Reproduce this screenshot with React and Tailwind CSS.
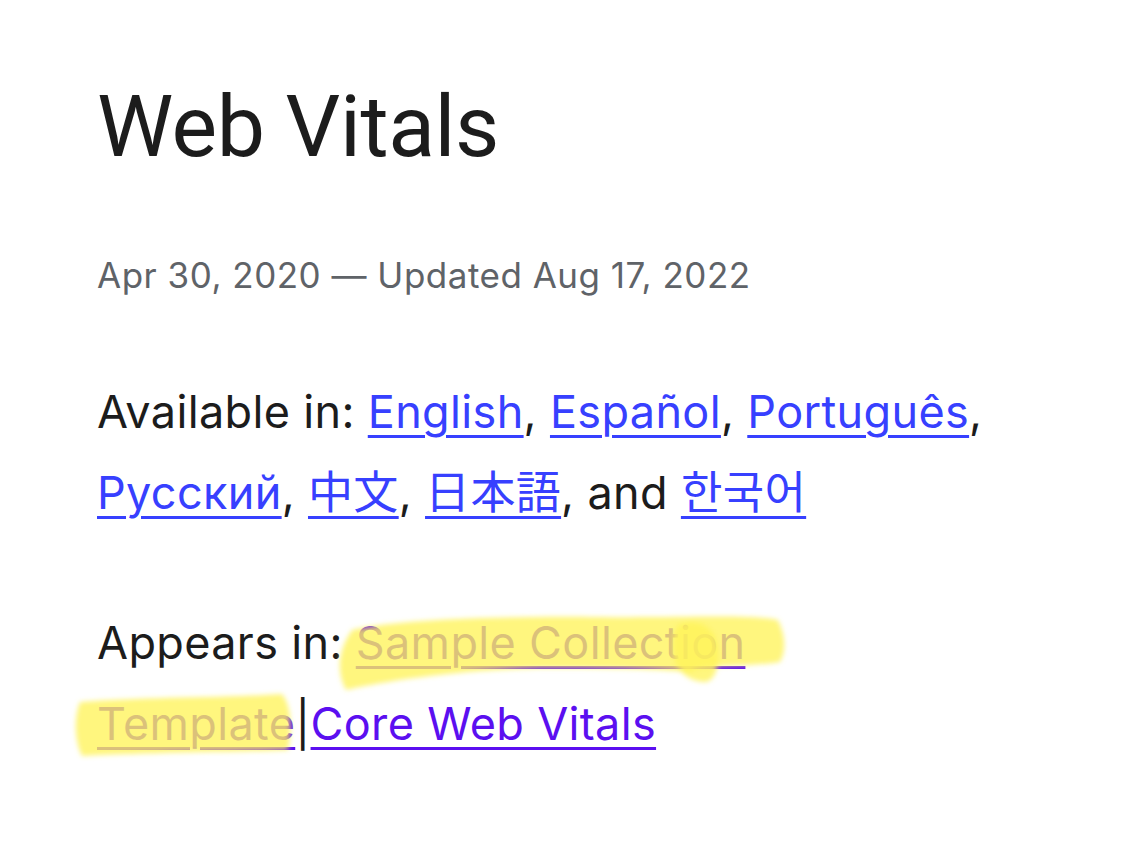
const langs = [
  ["English", ","],
  ["Español", ","],
  ["Português", ","],
];

const langs2 = [
  ["Русский", ","],
  ["中文", ","],
  ["日本語", ", and"],
];

const Link = ({ children, visited }) => (
  <a
    href="#"
    className={
      visited
        ? "text-[#5b0ff0] underline decoration-[3px] underline-offset-[7px]"
        : "text-[#3740ff] underline decoration-[3px] underline-offset-[7px]"
    }
  >
    {children}
  </a>
);

const Highlighter = () => (
  <svg
    className="pointer-events-none absolute inset-0"
    width="1125"
    height="853"
    viewBox="0 0 1125 853"
  >
    <defs>
      <filter id="soft" x="-10%" y="-30%" width="120%" height="160%">
        <feGaussianBlur stdDeviation="2.5" />
      </filter>
    </defs>
    <g filter="url(#soft)" fill="#fff35a" fillOpacity="0.78">
      <path d="M352 630 C 400 618, 520 616, 600 617 C 680 618, 750 614, 778 620 C 786 636, 786 652, 780 662 C 740 668, 700 664, 690 672 C 650 668, 600 668, 540 668 C 460 670, 390 680, 346 690 C 336 672, 338 650, 352 630 Z" />
      <path d="M680 624 C 700 618, 716 628, 718 648 C 720 664, 716 680, 706 682 C 690 682, 676 672, 674 656 C 672 640, 674 628, 680 624 Z" />
      <path d="M80 702 C 140 697, 220 698, 282 694 C 292 706, 292 730, 288 750 C 240 752, 160 752, 82 756 C 74 740, 74 716, 80 702 Z" />
    </g>
  </svg>
);

export default function App() {
  return (
    <div className="relative min-h-screen w-[1125px] overflow-hidden bg-white pl-[97px] pt-[84px]">
      <h1 className="font-['Roboto',sans-serif] text-[86px] font-normal leading-none tracking-[-0.4px] text-[#1c1c1c]">
        Web Vitals
      </h1>

      <p className="mt-[88px] font-['Inter',sans-serif] text-[35px] leading-none tracking-[0.5px] text-[#5f6368]">
        Apr 30, 2020 — Updated Aug 17, 2022
      </p>

      <p className="mt-[78px] font-['Inter','Noto_Sans_CJK_JP',sans-serif] text-[45px] leading-[81px] tracking-[0.35px] text-[#1c1c1c]">
        Available in:{" "}
        {langs.map(([name, sep]) => (
          <span key={name}>
            <Link>{name}</Link>
            {sep}{" "}
          </span>
        ))}
        <br />
        {langs2.map(([name, sep]) => (
          <span key={name}>
            <Link>{name}</Link>
            {sep}{" "}
          </span>
        ))}
        <Link>한국어</Link>
      </p>

      <p className="mt-[69px] font-['Inter',sans-serif] text-[45px] leading-[81px] tracking-[0.35px] text-[#1c1c1c]">
        Appears in: <Link visited>Sample Collection</Link>
        <br />
        <Link visited>Template</Link>|<Link visited>Core Web Vitals</Link>
      </p>

      <Highlighter />
    </div>
  );
}
